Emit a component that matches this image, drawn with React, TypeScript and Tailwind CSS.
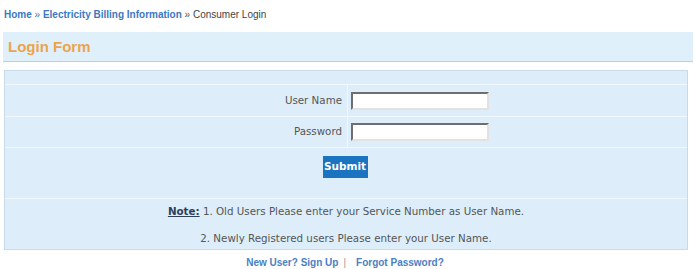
import React from 'react';

const verdana = "font-['DejaVu_Sans',Verdana,sans-serif]";

const App: React.FC = () => {
  return (
    <div className="w-[696px] h-[269px] bg-white overflow-hidden font-['Liberation_Sans',Arial,sans-serif]">
      {/* Breadcrumb */}
      <div className="h-[32px] pl-[4px] pt-[9px] text-[10px] leading-[12px] text-[#444]">
        <a className="font-bold text-[#3c78c0]">Home</a>
        <span className="text-[#3c78c0]"> » </span>
        <a className="font-bold text-[#3c78c0]">Electricity Billing Information</a>
        <span className="text-[#555]"> » </span>
        <span>Consumer Login</span>
      </div>

      {/* Header band */}
      <div className="mx-[3px] h-[30px] bg-[#dff0fb] border-b border-[#b8d0e0] flex items-center pl-[5px]">
        <h2 className="text-[15px] font-bold text-[#eda44c] leading-none">Login Form</h2>
      </div>

      {/* Form table */}
      <div className={`ml-[4px] mr-[8px] mt-[8px] border border-[#c9dbe8] bg-[#ddeefa] ${verdana} text-[10.3px] text-[#555]`}>
        <div className="h-[14px] border-b border-[#f2f9fe]" />
        <div className="flex h-[32px] border-b border-[#f2f9fe]">
          <div className="w-[343px] border-r border-[#f2f9fe] flex items-center justify-end pr-[5px]">User Name</div>
          <div className="flex-1 flex items-center pl-[3px]">
            <input className="w-[138px] h-[18px] bg-white border-2 border-t-[#6e6e6e] border-l-[#6e6e6e] border-r-[#e2e2e2] border-b-[#e2e2e2] outline-none" />
          </div>
        </div>
        <div className="flex h-[31px] border-b border-[#f2f9fe]">
          <div className="w-[343px] border-r border-[#f2f9fe] flex items-center justify-end pr-[5px]">Password</div>
          <div className="flex-1 flex items-center pl-[3px]">
            <input type="password" className="w-[138px] h-[18px] bg-white border-2 border-t-[#6e6e6e] border-l-[#6e6e6e] border-r-[#e2e2e2] border-b-[#e2e2e2] outline-none" />
          </div>
        </div>
        <div className="h-[51px] border-b border-[#f2f9fe] flex items-start justify-center pt-[8px]">
          <button className="w-[45px] h-[22px] bg-[#1b74c2] text-white font-bold text-[10.5px] ml-[-2px]">Submit</button>
        </div>
        <div className="h-[50px] flex flex-col items-center pt-[5px]">
          <p className="leading-[14px]">
            <span className="font-bold text-[#2e3f58] underline">Note:</span> 1. Old Users Please enter your Service Number as User Name.
          </p>
          <p className="leading-[14px] mt-[13px]">2. Newly Registered users Please enter your User Name.</p>
        </div>
      </div>

      {/* Footer links */}
      <div className="flex justify-center items-center pt-[7px] text-[10px] leading-[12px] ml-[-6px]">
        <a className="font-bold text-[#4a80c4]">New User? Sign Up</a>
        <span className="mx-[5px] text-[#999]">|</span>
        <a className="font-bold text-[#4a80c4] ml-[5px]">Forgot Password?</a>
      </div>
    </div>
  );
};

export default App;
